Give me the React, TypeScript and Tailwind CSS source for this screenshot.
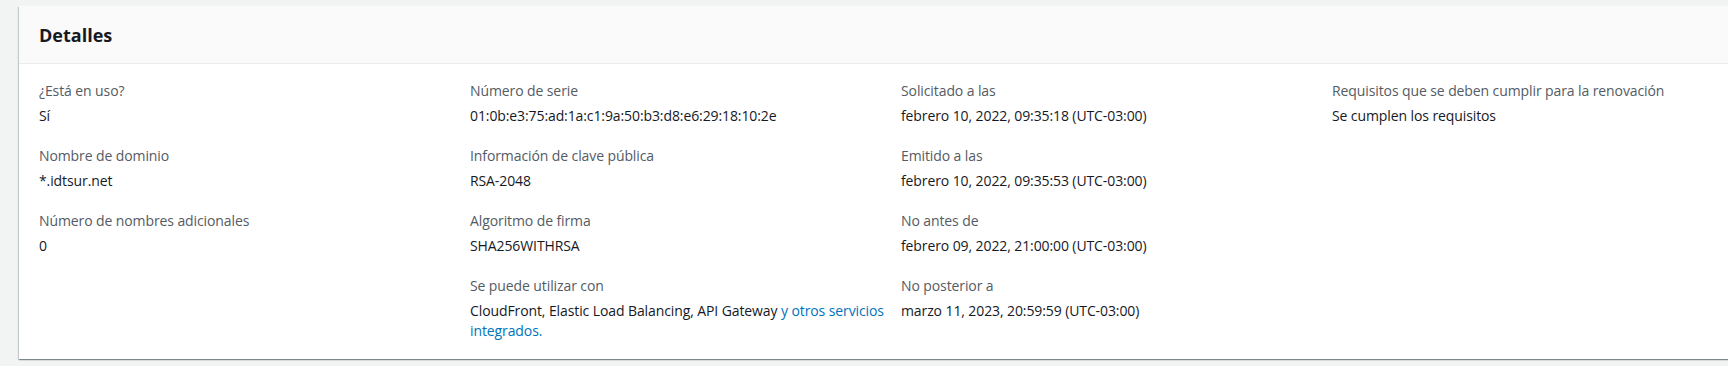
export default function App() {
  const font = { fontFamily: '"Open Sans", "Noto Sans", sans-serif' };
  return (
    <div className="h-[366px] w-[1728px] overflow-hidden bg-[#f2f3f3] pl-[19px] pt-[6px]" style={font}>
      <div className="w-[1740px] bg-white shadow-[0_1px_1px_0_rgba(0,28,36,0.3),1px_1px_1px_0_rgba(0,28,36,0.15),-1px_1px_1px_0_rgba(0,28,36,0.15)]">
        {/* header */}
        <div className="flex h-[58px] items-center border-b border-[#eaeded] bg-[#fafafa] px-5">
          <h2 className="text-[18px] font-bold leading-[22px] text-[#16191f]">Detalles</h2>
        </div>
        {/* body */}
        <div className="grid grid-cols-[431px_431px_431px_431px] px-5 pb-[18px] pt-[17px] text-[14px] leading-5 tracking-[-0.1px]">
          <div className="flex flex-col gap-5">
            <Item label="¿Está en uso?" value="Sí" />
            <Item label="Nombre de dominio" value="*.idtsur.net" />
            <Item label="Número de nombres adicionales" value="0" />
          </div>
          <div className="flex flex-col gap-5">
            <Item label="Número de serie" value="01:0b:e3:75:ad:1a:c1:9a:50:b3:d8:e6:29:18:10:2e" />
            <Item label="Información de clave pública" value="RSA-2048" />
            <Item label="Algoritmo de firma" value="SHA256WITHRSA" />
            <div>
              <div className="text-[#545b64]">Se puede utilizar con</div>
              <div className="mt-[5px] text-[#16191f]">
                <div>
                  CloudFront, Elastic Load Balancing, API Gateway{" "}
                  <a href="#" className="text-[#0073bb]">y otros servicios</a>
                </div>
                <a href="#" className="block text-[#0073bb]">integrados.</a>
              </div>
            </div>
          </div>
          <div className="flex flex-col gap-5">
            <Item label="Solicitado a las" value="febrero 10, 2022, 09:35:18 (UTC-03:00)" />
            <Item label="Emitido a las" value="febrero 10, 2022, 09:35:53 (UTC-03:00)" />
            <Item label="No antes de" value="febrero 09, 2022, 21:00:00 (UTC-03:00)" />
            <Item label="No posterior a" value="marzo 11, 2023, 20:59:59 (UTC-03:00)" />
          </div>
          <div className="flex flex-col gap-5">
            <Item label="Requisitos que se deben cumplir para la renovación" value="Se cumplen los requisitos" />
          </div>
        </div>
      </div>
    </div>
  );
}

function Item({ label, value }: { label: string; value: string }) {
  return (
    <div>
      <div className="text-[#545b64]">{label}</div>
      <div className="mt-[5px] text-[#16191f]">{value}</div>
    </div>
  );
}
